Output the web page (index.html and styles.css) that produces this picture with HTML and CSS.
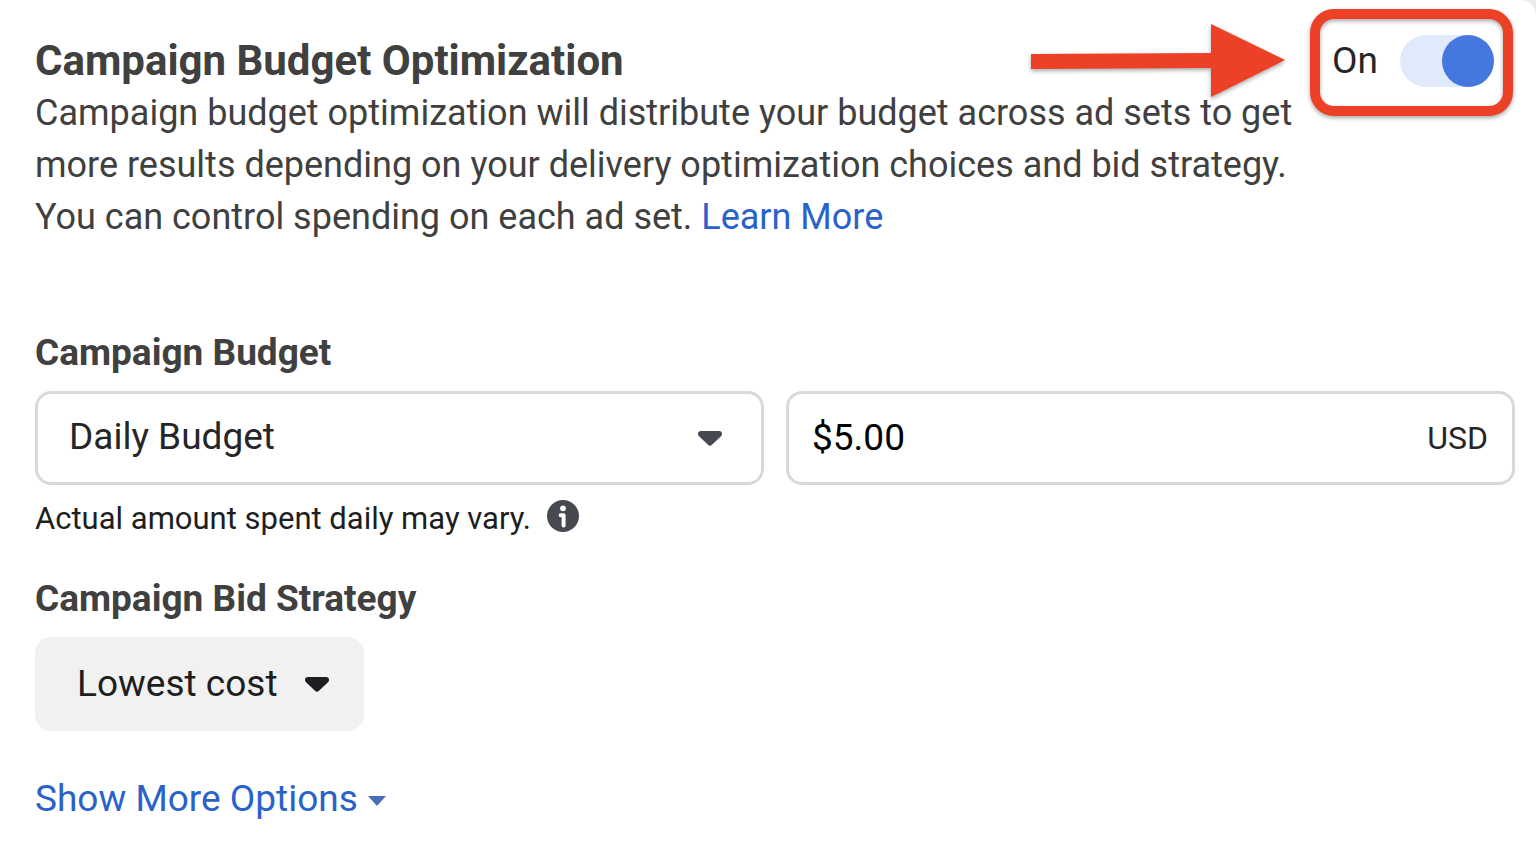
FILE: index.html
```html
<!DOCTYPE html>
<html lang="en">
<head>
  <meta charset="UTF-8" />
  <meta name="viewport" content="width=device-width, initial-scale=1.0"/>
  <title>Campaign Budget Optimization</title>
  <link rel="stylesheet" href="styles.css">
</head>
<body>

<div class="card">
  <!-- Header -->
  <div class="header">
    <h1>Campaign Budget Optimization</h1>
    <div class="toggle">
      <label for="cbo">On</label>
      <input type="checkbox" id="cbo" class="switch" checked>
      <div class="callout"></div>
      <svg class="arrow" width="254" height="74" viewBox="0 0 254 74" aria-hidden="true">
        <path d="M0 30 L180 29 V0 L254 36 L180 73 V44 L0 45 Z" fill="#ec4127"/>
      </svg>
    </div>
  </div>
  <p class="description">Campaign budget optimization will distribute your budget across ad sets to get more results depending on your delivery optimization choices and bid strategy. You can control spending on each ad set. <a href="#">Learn More</a></p>

  <!-- Budget -->
  <label class="section-title" for="budgetType">Campaign Budget</label>
  <div class="fields">
    <div class="field">
      <select id="budgetType">
        <option>Daily Budget</option>
        <option>Lifetime Budget</option>
      </select>
      <svg class="caret" width="24" height="16" viewBox="0 0 24 16" aria-hidden="true">
        <path d="M3 1 H21 Q24 1 24 4 Q24 5.500 22.500 6.800 L14 14.800 Q12 16.500 10 14.800 L1.500 6.800 Q0 5.500 0 4 Q0 1 3 1 Z"/>
      </svg>
    </div>
    <div class="field">
      <input type="text" id="amount" class="amount" value="$5.00" aria-label="Budget amount">
      <label class="currency" for="amount">USD</label>
    </div>
  </div>
  <div class="hint">
    <span>Actual amount spent daily may vary.</span>
    <svg class="info" width="32" height="32" viewBox="0 0 32 32" aria-hidden="true">
      <circle cx="16" cy="16" r="16" fill="#464950"/>
      <circle cx="16" cy="8.300" r="2.900" fill="#fff"/>
      <path d="M13.600 15.200 H16.600 V25.600" fill="none" stroke="#fff" stroke-width="4" stroke-linecap="round" stroke-linejoin="round"/>
    </svg>
  </div>

  <!-- Bid strategy -->
  <label class="section-title" for="bidStrategy">Campaign Bid Strategy</label>
  <div class="strategy">
    <select id="bidStrategy">
      <option>Lowest cost</option>
      <option>Cost cap</option>
      <option>Bid cap</option>
    </select>
    <svg class="caret" width="24" height="16" viewBox="0 0 24 16" aria-hidden="true">
      <path d="M3 1 H21 Q24 1 24 4 Q24 5.500 22.500 6.800 L14 14.800 Q12 16.500 10 14.800 L1.500 6.800 Q0 5.500 0 4 Q0 1 3 1 Z"/>
    </svg>
  </div>

  <button type="button" class="more">
    Show More Options
    <svg width="18" height="12" viewBox="0 0 18 12" aria-hidden="true">
      <path d="M0 1 H18 L9 11 Z" fill="#4a6fb8"/>
    </svg>
  </button>
</div>

</body>
</html>
```

FILE: styles.css
```css
* { box-sizing: border-box; }
body {
  margin: 0;
  background: #e9ebed;
  font-family: Roboto, "Liberation Sans", sans-serif;
  font-size: 37px; line-height: 52px;
  color: #404040;
}
.card {
  min-height: 100vh;
  padding: 35px 21px 24px 35px;
  background: #fff;
  border-top-right-radius: 16px;
}
.header {
  display: flex; justify-content: space-between; align-items: center;
}
h1 {
  margin: 0;
  font-size: 42px; font-weight: 700; line-height: 52px;
}
a { color: #2a62c9; text-decoration: none; }

.toggle {
  position: relative;
  display: flex; align-items: center; gap: 22px;
  margin-right: 21px;
  color: #262626;
}
.switch {
  appearance: none;
  width: 94px; height: 52px; margin: 0;
  border-radius: 26px; background: #e1eafb;
  cursor: pointer;
}
.switch::before {
  content: ""; display: block;
  width: 52px; height: 52px;
  border-radius: 50%; background: #4578de;
}
.switch:checked::before { margin-left: auto; }

/* Highlight drawn over the toggle */
.callout {
  position: absolute; top: -26px; right: -19px; bottom: -29px; left: -22px;
  border: 10px solid #ec4127; border-radius: 24px;
  filter: drop-shadow(0 2px 2px rgba(0,0,0,0.35));
  pointer-events: none;
}
.arrow {
  position: absolute; top: -11px; right: 209px;
  filter: drop-shadow(0 2px 2px rgba(0,0,0,0.35));
}

.description {
  max-width: 1280px;
  margin: 0 0 84px;
  font-size: 36px;
}
.section-title {
  display: block;
  margin-bottom: 12px;
  font-weight: 700;
}
.fields {
  display: grid; grid-template-columns: 1fr 1fr; gap: 22px;
}
.field {
  position: relative;
  display: flex; align-items: center;
  height: 94px;
  border: 3px solid #d9d9d9; border-radius: 16px;
}
select, input, button {
  font: inherit; color: #262626;
}
select {
  appearance: none;
  width: 100%; height: 100%;
  border: none; border-radius: 16px; background: none;
}
.field select { padding: 0 80px 2px 31px; }
.amount {
  flex: 1; min-width: 0; height: 100%;
  padding: 0 23px 2px;
  border: none; border-radius: 16px; background: none;
  color: #000;
}
.currency {
  margin-right: 24px;
  font-size: 32px; color: #262626;
}
.caret {
  position: absolute; right: 39px; top: 36px;
  fill: #464950; pointer-events: none;
}
.hint {
  display: flex; align-items: center; gap: 16px;
  margin: 8px 0 28px;
  font-size: 31px; color: #1c1e21;
}
.info { margin-bottom: 6px; }
.strategy {
  position: relative;
  width: fit-content; height: 94px;
  margin-bottom: 42px;
}
.strategy select {
  padding: 0 86px 0 42px;
  background: #f1f1f1; color: #1c1e21;
}
.strategy .caret { right: 35px; top: 39px; fill: #1c1e21; }
.more {
  display: flex; align-items: center; gap: 10px;
  padding: 0; border: none; background: none;
  color: #2a62c9; cursor: pointer;
}
.more svg { margin-top: 4px; }
```
